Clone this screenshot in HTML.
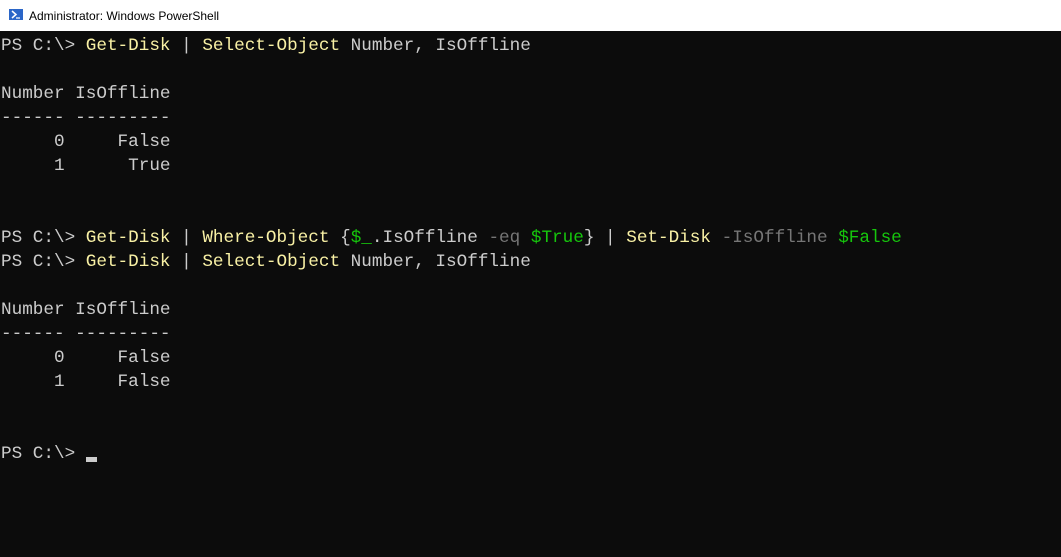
<!DOCTYPE html>
<html><head><meta charset="utf-8"><style>
html,body{margin:0;padding:0;width:1061px;height:557px;overflow:hidden;background:#0c0c0c;}
.title{position:absolute;left:0;top:0;width:1061px;height:31px;background:#fff;font-family:"Liberation Sans",sans-serif;font-size:12px;color:#000;}
.title span{position:absolute;left:29px;top:9px;}
.icon{position:absolute;left:9px;top:9px;width:14px;height:11px;background:#2b66c8;}
.term{position:absolute;left:1px;top:34px;font-family:"Liberation Mono",monospace;font-size:17.67px;line-height:24px;color:#cccccc;white-space:pre;}
.y{color:#f9f1a5}.g{color:#767676}.v{color:#16c60c}
.cur{position:absolute;left:86px;top:457px;width:11px;height:5px;background:#cccccc;}
</style></head><body>
<div class="title"><div class="icon"><svg width="14" height="11" viewBox="0 0 14 11"><path d="M3 2 L7 5.5 L3 9" stroke="#fff" stroke-width="1.5" fill="none"/><path d="M7 9 H11" stroke="#fff" stroke-width="1.2"/></svg></div><span>Administrator: Windows PowerShell</span></div>
<div class="term">PS C:\&gt; <span class="y">Get-Disk</span> | <span class="y">Select-Object</span> Number, IsOffline

Number IsOffline
------ ---------
     0     False
     1      True


PS C:\&gt; <span class="y">Get-Disk</span> | <span class="y">Where-Object</span> {<span class="v">$_</span>.IsOffline <span class="g">-eq</span> <span class="v">$True</span>} | <span class="y">Set-Disk</span> <span class="g">-IsOffline</span> <span class="v">$False</span>
PS C:\&gt; <span class="y">Get-Disk</span> | <span class="y">Select-Object</span> Number, IsOffline

Number IsOffline
------ ---------
     0     False
     1     False


PS C:\&gt; </div>
<div class="cur"></div>
</body></html>
